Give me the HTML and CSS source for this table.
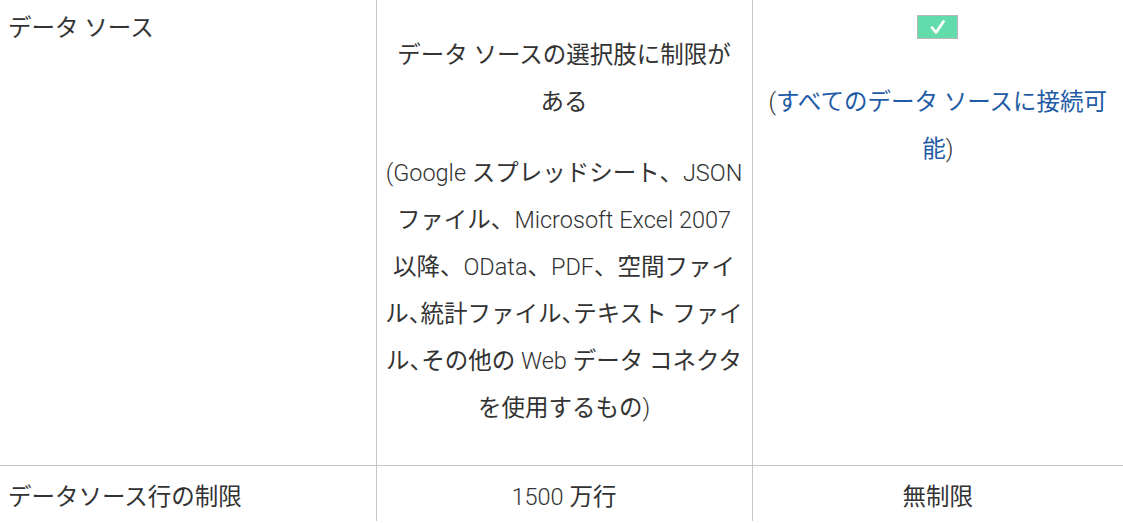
FILE: index.html
```html
<!DOCTYPE html>
<html lang="ja">
<head>
<meta charset="utf-8">
<title>比較表</title>
<link rel="stylesheet" href="styles.css">
</head>
<body>
<table class="compare">
  <colgroup><col class="c1"><col class="c2"><col class="c3"></colgroup>
  <tbody>
    <tr class="row-top">
      <td class="label">データ ソース</td>
      <td class="value">
        <p class="lead">データ ソースの選択肢に制限が<br>ある</p>
        <p class="note"><span class="en">(Google</span> スプレッドシート、<span class="en">JSON</span><br>ファイル、<span class="en">Microsoft Excel 2007</span><br>以降、<span class="en">OData</span>、<span class="en">PDF</span>、空間ファイ<br><span class="tight">ル、統計ファイル、テキスト ファイ</span><br><span class="tight">ル、その他の <span class="en">Web</span> データ コネクタ</span><br>を使用するもの<span class="en">)</span></p>
      </td>
      <td class="value">
        <div class="check-wrap">
          <svg class="check" width="41" height="24" viewBox="0 0 41 24" aria-label="対応">
            <rect x="0.5" y="0.5" width="40" height="23" fill="#62dcab" stroke="#b9b9b9"/>
            <path d="M15 12.5 L19 17.5 L26.5 6.5" fill="none" stroke="#ffffff" stroke-width="2.8" stroke-linecap="round" stroke-linejoin="round"/>
          </svg>
        </div>
        <p class="any"><span class="en">(</span><a href="#" class="link">すべてのデータ ソースに接続可能</a><span class="en">)</span></p>
      </td>
    </tr>
    <tr class="row-bottom">
      <td class="label">データソース行の制限</td>
      <td class="value"><span class="en">1500</span> 万行</td>
      <td class="value">無制限</td>
    </tr>
  </tbody>
</table>
</body>
</html>
```
FILE: styles.css
```css
html, body {
  margin: 0;
  padding: 0;
  background: #ffffff;
}
body {
  font-family: "Roboto", "Noto Sans CJK JP", sans-serif;
  font-weight: 400;
  font-size: 23.5px;
  line-height: 47px;
  color: #333333;
  overflow: hidden;
}
.en {
  font-weight: 300;
}
.tight {
  font-feature-settings: "halt" 1;
  white-space: nowrap;
}
.compare {
  width: 1123px;
  border-collapse: collapse;
  table-layout: fixed;
}
.c1, .c2 { width: 376px; }
.compare td {
  vertical-align: top;
  padding: 0;
}
.compare td + td {
  border-left: 1px solid #c6c6c6;
}
.row-top td {
  height: 465px;
  box-sizing: border-box;
  padding-top: 5px;
}
.row-bottom td {
  border-top: 1px solid #c6c6c6;
  padding-top: 8px;
}
.label {
  padding-left: 8px !important;
  padding-right: 8px;
}
.value {
  text-align: center;
  padding-left: 8px !important;
  padding-right: 8px !important;
}
.compare p {
  margin: 0;
}
.lead {
  margin-top: 27px !important;
}
.note {
  margin-top: 24px !important;
}
.check-wrap {
  height: 41px;
  padding-top: 10px;
  line-height: 0;
  box-sizing: border-box;
}
.check {
  display: inline-block;
}
.any {
  margin-top: 33px !important;
}
.link {
  color: #1f5ca6;
  text-decoration: none;
}
```
